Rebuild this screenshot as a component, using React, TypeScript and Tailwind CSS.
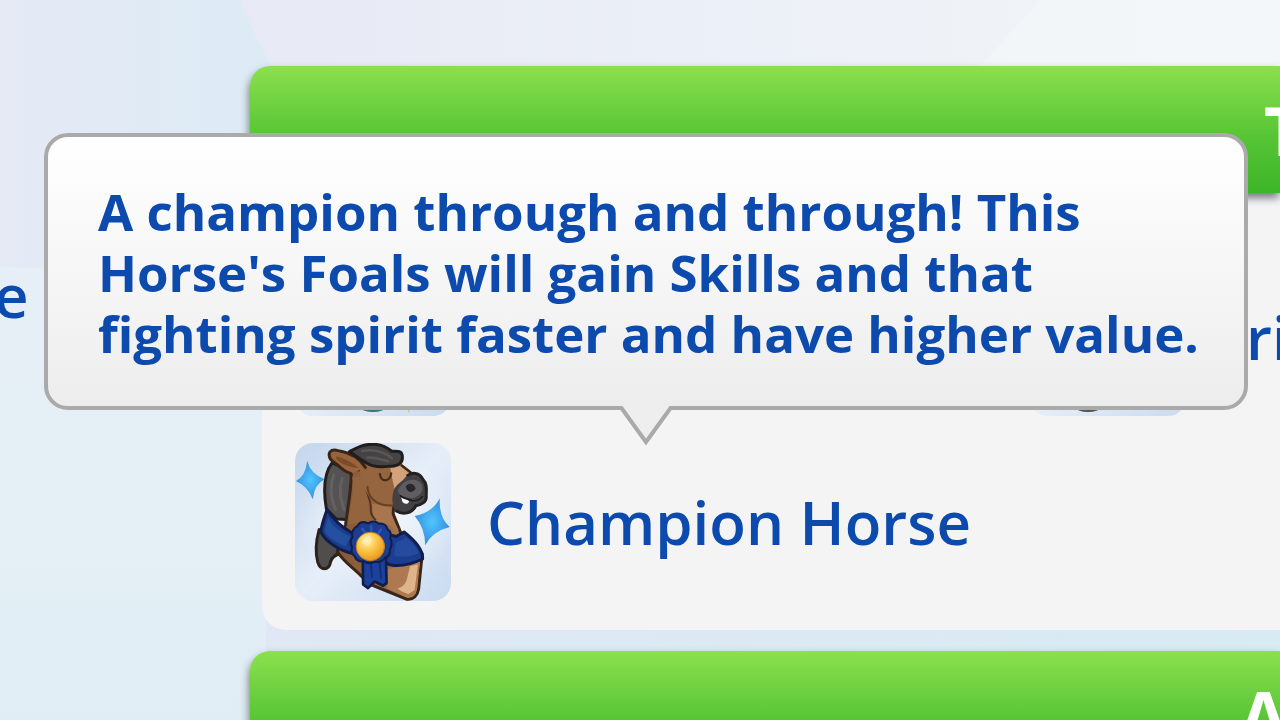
import type { ReactNode } from "react";

function Backdrop() {
  return (
    <svg viewBox="0 0 1280 720" preserveAspectRatio="none" className="absolute inset-0 h-full w-full" aria-hidden="true">
      <defs>
        <linearGradient id="sky">
          <stop offset="0" stopColor="#e5eaf5" />
          <stop offset="0.22" stopColor="#dcebf5" />
          <stop offset="1" stopColor="#d9eaf4" />
        </linearGradient>
        <linearGradient id="swoosh">
          <stop offset="0" stopColor="#e7eaf5" />
          <stop offset="0.5" stopColor="#ecf0f7" />
          <stop offset="1" stopColor="#f3f6f8" />
        </linearGradient>
        <linearGradient id="lower" x1="0" y1="0" x2="0" y2="1">
          <stop offset="0" stopColor="#e6eff7" />
          <stop offset="0.5" stopColor="#e5eff6" />
          <stop offset="1" stopColor="#e0edf4" />
        </linearGradient>
        <linearGradient id="strip">
          <stop offset="0" stopColor="#dfe8f4" />
          <stop offset="1" stopColor="#d8eaf4" />
        </linearGradient>
      </defs>
      <rect width="1280" height="720" fill="url(#sky)" />
      <path d="M240 0Q270 80 345 160H1280V0Z" fill="url(#swoosh)" />
      <path d="M1040 0L980 66H1280V0Z" fill="#f6f9fa" opacity="0.4" />
      <path d="M0 267Q130 270 270 300V720H0Z" fill="url(#lower)" />
      <path d="M266 610H1280V720H266Z" fill="url(#strip)" />
    </svg>
  );
}

function IconTile({ children }: { children: ReactNode }) {
  return (
    <div className="h-[158px] w-[156px] shrink-0 overflow-hidden rounded-[18px] bg-linear-to-br from-[#c3d6ed] via-[#e6eef8] to-[#c9dbf0]">
      {children}
    </div>
  );
}

function HorseIcon() {
  return (
    <svg viewBox="44 38 470 478" className="h-full w-full" strokeLinejoin="round" strokeLinecap="round">
      <defs>
        <radialGradient id="tileGlow">
          <stop offset="0" stopColor="#f4f7fb" />
          <stop offset="1" stopColor="#f4f7fb" stopOpacity="0" />
        </radialGradient>
        <linearGradient id="coat" x1="0" y1="0" x2="1" y2="0">
          <stop offset="0" stopColor="#845633" />
          <stop offset="0.6" stopColor="#996a45" />
          <stop offset="1" stopColor="#c9966b" />
        </linearGradient>
        <radialGradient id="medal" cx="0.38" cy="0.3" r="0.75">
          <stop offset="0" stopColor="#fff3bd" />
          <stop offset="0.45" stopColor="#fdc94c" />
          <stop offset="1" stopColor="#e59316" />
        </radialGradient>
        <radialGradient id="spark">
          <stop offset="0" stopColor="#52c5ff" />
          <stop offset="0.6" stopColor="#3fa5ec" />
          <stop offset="1" stopColor="#3e92d8" />
        </radialGradient>
      </defs>
      <ellipse cx="290" cy="270" rx="240" ry="210" fill="url(#tileGlow)" />

      {/* back mane */}
      <path d="M155 98C131 130 128 180 138 238L168 268L218 270L228 130Z" fill="#545252" stroke="#231e1c" strokeWidth="9" />
      <path d="M160 135C148 170 151 207 166 240M186 145C176 178 178 206 192 240" fill="none" stroke="#636060" strokeWidth="9" />

      {/* left shoulder */}
      <path d="M116 300C106 336 104 370 112 399C120 425 145 426 151 397C154 382 168 375 188 367L170 310Z" fill="#504d4d" stroke="#2c211b" strokeWidth="9" />

      {/* neck and body */}
      <path d="M213 118C216 165 204 224 196 284L171 366C190 398 220 415 244 441L270 466L326 488L382 511C402 512 414 499 417 480L428 373L363 310L340 252L345 190L260 120Z" fill="url(#coat)" stroke="#3a2519" strokeWidth="9" />
      <path d="M322 420L421 400L408 493Q399 507 382 501L323 479Z" fill="#ae7951" />
      <path d="M391 411L415 405L405 483L386 495Q365 488 353 479Q377 472 382 448Z" fill="#e0b48b" />
      <path d="M216 140C224 186 210 236 203 284L268 276C272 236 258 190 254 140Z" fill="#94643f" />
      <path d="M276 222L330 228L336 262L357 303L325 285L280 274Z" fill="#a8764e" />
      <path d="M256 170C262 200 276 214 272 240C272 254 278 262 286 270" fill="none" stroke="#55331e" strokeWidth="6" />

      {/* head */}
      <path d="M238 102C262 88 312 92 368 106L402 134L400 180L352 228C318 234 286 224 270 202C252 182 240 150 238 102Z" fill="#94653e" />
      <path d="M330 106L366 106L402 134L370 160L346 186L336 140Z" fill="#d3a27b" />
      <path d="M366 106L398 131" fill="none" stroke="#3a2519" strokeWidth="8" />
      <path d="M262 170C266 210 296 232 346 226" fill="none" stroke="#684124" strokeWidth="6" />
      <path d="M300 132C302 157 330 158 334 130" fill="none" stroke="#4b2d1b" strokeWidth="7" />

      {/* ear */}
      <path d="M256 112C240 86 214 68 174 61C149 55 140 68 151 88C160 98 172 102 180 112C196 124 206 130 216 130Z" fill="#99643c" />
      <path d="M256 112C240 86 214 68 174 61C149 55 140 68 151 88C160 98 172 102 180 112C192 122 200 128 212 130" fill="none" stroke="#3a2519" strokeWidth="9" />
      <path d="M168 78C192 84 216 96 236 114C212 112 186 106 168 86Z" fill="#7c4c2a" />

      {/* forelock */}
      <path d="M208 64C228 54 248 40 284 42C306 43 322 52 336 63C350 64 365 60 367 74C372 98 355 110 330 108C300 112 278 110 262 100C240 88 226 76 208 64Z" fill="#454344" stroke="#211d1c" strokeWidth="9" />
      <path d="M246 62C280 56 312 64 336 84M262 82C286 80 305 88 325 94" fill="none" stroke="#5a5758" strokeWidth="8" />

      {/* muzzle */}
      <path d="M372 148C382 128 420 124 430 148C444 162 440 182 440 200C442 216 424 226 408 228C398 252 368 256 350 244C334 232 336 196 342 180C350 164 362 158 372 148Z" fill="#434144" />
      <path d="M384 136C396 126 420 126 430 148C444 162 440 182 440 200C442 216 424 226 408 228C398 252 368 256 350 244" fill="none" stroke="#252122" strokeWidth="9" />
      <path d="M354 182C368 148 411 138 427 164C434 189 415 200 398 206C380 208 360 200 354 182Z" fill="#5f5d61" />
      <path d="M378 170C385 156 404 160 408 176C400 192 382 188 378 170Z" fill="#29272a" />
      <path d="M364 202C372 210 380 206 388 214C386 224 374 224 368 216Z" fill="#fff" />
      <path d="M362 198C370 206 388 206 396 212C407 214 420 210 429 200" fill="none" stroke="#201e20" strokeWidth="5" />

      {/* sash */}
      <path d="M140 239C133 260 124 282 121 307C139 340 181 365 222 373L334 407C365 413 397 404 429 389C431 365 411 337 373 307L349 321L310 311L212 308C184 292 158 269 140 239Z" fill="#1b3d8f" stroke="#111d4a" strokeWidth="9" />
      <path d="M144 260C149 287 183 308 210 321L197 350C171 342 143 324 132 305Z" fill="#24509f" />
      <path d="M347 340L379 324C396 337 408 352 417 371C394 383 366 386 343 378Z" fill="#244b9d" />

      {/* rosette */}
      <path d="M248 378L249 466L264 477L284 457L310 470L320 462L318 374Z" fill="#1b419a" stroke="#111d4a" strokeWidth="8" />
      <path d="M272 389L276 444M298 388L303 447" stroke="#132f77" strokeWidth="6" />
      <path d="M232 289Q242 271 264 281Q281 269 297 282Q317 279 324 300Q337 307 331 325Q340 342 330 361Q332 380 315 385Q304 401 286 397Q268 407 251 396Q229 398 224 381Q209 371 216 354Q206 337 217 323Q211 301 232 289Z" fill="#1b3d92" stroke="#111d4a" strokeWidth="6" />
      <path d="M246 298L256 310M273 290L274 304M303 300L295 312" stroke="#2857b0" strokeWidth="8" />
      <circle cx="271" cy="351" r="43" fill="url(#medal)" stroke="#c77d22" strokeWidth="3" />
      <path d="M250 325L270 320L277 333L264 348L247 343Z" fill="#fff1b5" opacity="0.6" />

      {/* sparkles */}
      <path d="M80 92Q88 130 133 148Q102 162 97 208Q81 169 46 153Q75 139 80 92Z" fill="url(#spark)" />
      <path d="M481 205Q478 264 511 292Q459 305 437 347Q436 294 405 259Q459 248 481 205Z" fill="url(#spark)" />
    </svg>
  );
}

function BannerHeader({ title }: { title: string }) {
  return (
    <h2 className="relative z-10 flex h-[127px] items-center justify-end rounded-l-[20px] bg-linear-to-b from-[#8be04e] via-[#56c535] via-55% to-[#3cb528] text-[68px] leading-[68px] font-bold text-white shadow-[-1px_5px_8px_#737b80]">
      {/* the title runs on past the right edge */}
      <span className={title === "A" ? "w-10" : "w-4"}>{title}</span>
    </h2>
  );
}

function TraitTooltip() {
  return (
    <div role="tooltip" className="absolute top-[133px] right-[32px] left-[44px] z-20 rounded-3xl border-4 border-[#aaaaaa] bg-linear-to-b from-white to-[#ededed] px-[50px] pt-11 pb-[42px]">
      <p className="text-[51px] leading-[61px] font-bold whitespace-nowrap">
        A champion through and through! This
        <br />
        Horse's Foals will gain Skills and that
        <br />
        fighting spirit faster and have higher value.
      </p>
      <svg viewBox="0 0 56 40" className="absolute top-full left-1/2 h-10 w-14 -translate-x-1/2">
        <path d="M2 0L28 36L54 0" fill="#eeeeee" stroke="#aaaaaa" strokeWidth="4" />
      </svg>
    </div>
  );
}

export default function App() {
  return (
    <main className="relative h-screen overflow-hidden bg-[#dfebf5] font-['Open_Sans',sans-serif] text-[#0c4aad]">
      <Backdrop />
      <div className="relative grid grid-cols-[250px_1fr] pt-[66px]">
        <aside className="pt-[193px]">
          <p className="-ml-1.5 text-[60px] leading-[72px] font-semibold">e</p>
        </aside>

        <div className="flex min-w-0 flex-col gap-[21px]">
          <section>
            <BannerHeader title="T" />
            <div className="ml-3 grid grid-cols-[735px_1fr] gap-y-[27px] rounded-bl-3xl bg-[#f4f4f4] pt-[65px] pb-[29px] pl-[33px]">
              <IconTile>
                <svg viewBox="0 0 156 158" className="h-full w-full">
                  <ellipse cx="78" cy="134" rx="24" ry="20" fill="#39747b" />
                  <path d="M108 138L118 138L114 155Z" fill="#e3c13c" />
                </svg>
              </IconTile>
              <div className="flex items-center">
                <IconTile>
                  <svg viewBox="0 0 156 158" className="h-full w-full">
                    <ellipse cx="58" cy="133" rx="24" ry="21" fill="#59514c" />
                  </svg>
                </IconTile>
                <span className="ml-[60px] text-[60px] leading-[72px] font-semibold">ri</span>
              </div>
              <div className="flex items-center gap-9">
                <IconTile>
                  <HorseIcon />
                </IconTile>
                <h3 className="text-[60px] leading-[72px] font-semibold whitespace-nowrap">Champion Horse</h3>
              </div>
            </div>
          </section>
          <section>
            <BannerHeader title="A" />
          </section>
        </div>
      </div>
      <TraitTooltip />
    </main>
  );
}
